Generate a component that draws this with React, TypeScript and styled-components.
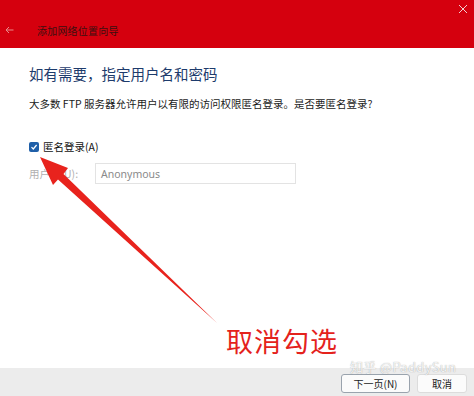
import styled, { createGlobalStyle } from "styled-components"

const GlobalStyle = createGlobalStyle`
  html, body {
    margin: 0;
    padding: 0;
    background: #ffffff;
  }
  body {
    font-family: "Noto Sans CJK SC", "Noto Sans", sans-serif;
  }
`

const Window = styled.div`
  position: relative;
  width: 474px;
  height: 396px;
  display: flex;
  flex-direction: column;
  overflow: hidden;
  background: #ffffff;
`

const TitleBar = styled.div`
  height: 48px;
  background: #d5000e;
  display: flex;
  flex-direction: column;
  flex-shrink: 0;
`

const CloseRow = styled.div`
  display: flex;
  justify-content: flex-end;
  padding: 4px 6px 0 0;
  height: 14px;
`

const TitleRow = styled.div`
  display: flex;
  align-items: center;
  height: 24px;
  padding-left: 5px;
`

const Title = styled.span`
  margin-left: 23px;
  font-size: 10px;
  color: #3a1010;
  letter-spacing: 0.2px;
`

const Body = styled.div`
  flex: 1;
  display: flex;
  flex-direction: column;
  padding: 16px 0 0 29px;
`

const Heading = styled.h1`
  margin: 0;
  font-size: 14.5px;
  font-weight: 400;
  color: #1d3b6c;
  line-height: 20px;
`

const Intro = styled.p`
  margin: 12px 0 0;
  font-size: 10.5px;
  color: #1a1a1a;
  line-height: 16px;
`

const CheckRow = styled.label`
  display: flex;
  align-items: center;
  gap: 4px;
  margin-top: 27px;
  font-size: 10.5px;
  color: #111;
`

const Box = styled.span`
  width: 10px;
  height: 10px;
  border-radius: 2px;
  background: #1f5fa8;
  display: flex;
  align-items: center;
  justify-content: center;
`

const FieldRow = styled.div`
  display: flex;
  align-items: center;
  margin-top: 9px;
`

const FieldLabel = styled.span`
  width: 66px;
  font-size: 10.5px;
  color: #b0b0b0;
`

const Input = styled.div`
  width: 194px;
  height: 19px;
  border: 1px solid #e3e3e3;
  padding-left: 5px;
  display: flex;
  align-items: center;
  font-family: "Noto Sans", sans-serif;
  font-size: 10.5px;
  color: #8a8a8a;
`

const Footer = styled.div`
  height: 28px;
  flex-shrink: 0;
  background: #ececec;
  display: flex;
  justify-content: flex-end;
  align-items: flex-end;
  gap: 7px;
  padding-right: 7px;
`

const Button = styled.div<{ $w: number; $primary?: boolean }>`
  width: ${(p) => p.$w}px;
  height: 17px;
  margin-bottom: 3px;
  background: #fbfbfb;
  border: 1px solid ${(p) => (p.$primary ? "#9aa3ad" : "#dcdcdc")};
  border-radius: 3px;
  display: flex;
  align-items: center;
  justify-content: center;
  font-size: 10px;
  color: #1a1a1a;
`

const Watermark = styled.div`
  position: absolute;
  left: 350px;
  top: 357px;
  font-family: "Noto Sans CJK SC", "Noto Sans", sans-serif;
  font-size: 13px;
  color: rgba(255, 255, 255, 0.85);
  text-shadow: 0 0 1px rgba(90, 90, 90, 0.6);
  letter-spacing: 0.3px;
  white-space: nowrap;
`

const Note = styled.div`
  position: absolute;
  left: 226px;
  top: 323px;
  font-size: 27px;
  color: #e4221c;
  letter-spacing: 1px;
  line-height: 36px;
`

const ArrowLayer = styled.svg`
  position: absolute;
  left: 0;
  top: 0;
  pointer-events: none;
`

export default function App() {
  return (
    <>
      <GlobalStyle />
      <Window>
        <TitleBar>
          <CloseRow>
            <svg width="10" height="10" viewBox="0 0 10 10">
              <path d="M1 1 L9 9 M9 1 L1 9" stroke="#f2d0d0" strokeWidth="1" />
            </svg>
          </CloseRow>
          <TitleRow>
            <svg width="9" height="8" viewBox="0 0 9 8">
              <path d="M8.5 4 H1 M4 1 L1 4 L4 7" stroke="#e88a8a" strokeWidth="1" fill="none" />
            </svg>
            <Title>添加网络位置向导</Title>
          </TitleRow>
        </TitleBar>
        <Body>
          <Heading>如有需要，指定用户名和密码</Heading>
          <Intro>大多数 FTP 服务器允许用户以有限的访问权限匿名登录。是否要匿名登录?</Intro>
          <CheckRow>
            <Box>
              <svg width="8" height="8" viewBox="0 0 8 8">
                <path d="M1.5 4.2 L3.3 6 L6.6 2" stroke="#fff" strokeWidth="1.2" fill="none" />
              </svg>
            </Box>
            匿名登录(A)
          </CheckRow>
          <FieldRow>
            <FieldLabel>用户名(U):</FieldLabel>
            <Input>Anonymous</Input>
          </FieldRow>
        </Body>
        <Footer>
          <Button $w={67} $primary>
            下一页(N)
          </Button>
          <Button $w={48}>取消</Button>
        </Footer>
        <ArrowLayer width="474" height="396" viewBox="0 0 474 396">
          <polygon
            points="40,157 68,168 63.5,174 217,323 58,179.5 53,185"
            fill="#e8231d"
          />
        </ArrowLayer>
        <Note>取消勾选</Note>
        <Watermark>知乎 @PaddySun</Watermark>
      </Window>
    </>
  )
}
